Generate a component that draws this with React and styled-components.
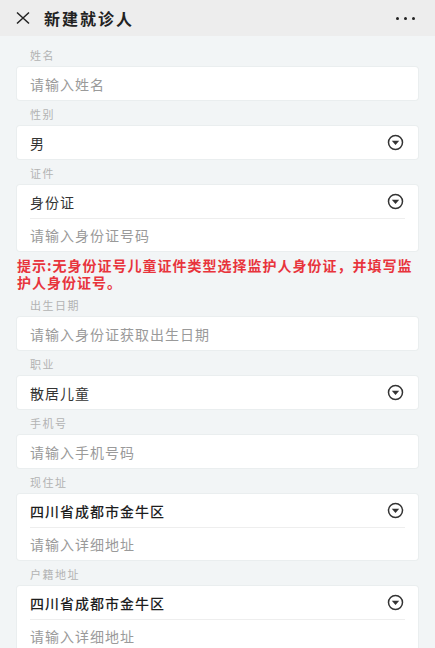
import React from "react";
import styled, { createGlobalStyle } from "styled-components";

const Global = createGlobalStyle`
  html, body { margin: 0; padding: 0; background: #f2f5f6; }
  body { font-family: "Noto Sans CJK SC", "Noto Sans", sans-serif; }
  * { box-sizing: border-box; }
`;

const Page = styled.div`
  width: 435px;
  min-height: 648px;
  background: #f2f5f6;
`;

const Header = styled.header`
  height: 36px;
  background: #ededed;
  display: flex;
  align-items: center;
  padding: 0 14px 0 15px;
`;

const Title = styled.h1`
  margin: 0 0 0 13px;
  flex: 1;
  font-size: 16px;
  letter-spacing: 2px;
  line-height: 36px;
  font-weight: 700;
  color: #222;
`;

const Dots = styled.div`
  display: flex;
  gap: 5px;
  margin-right: 6px;
`;

const Dot = styled.span`
  width: 3px;
  height: 3px;
  border-radius: 50%;
  background: #222;
`;

const Body = styled.main`
  padding: 5px 17px 0;
`;

const Label = styled.div`
  padding: 6px 0 4px 13px;
  font-size: 11px;
  letter-spacing: 1.5px;
  line-height: 16px;
  color: #b3b3b3;
`;

const Card = styled.div`
  background: #fff;
  border-radius: 3px;
  box-shadow: 0 0 0 1px #eaeeef;
  padding: 0 13px;
`;

const Row = styled.div`
  height: 33px;
  display: flex;
  align-items: center;
  justify-content: space-between;
  font-size: 14px;
  letter-spacing: 1px;
  color: ${(p) => (p.$value ? (p.$strong ? "#1e1e1e" : "#333") : "#9a9a9a")};
  font-weight: ${(p) => (p.$strong ? 500 : 400)};
  & + & { border-top: 1px solid #eeeeee; }
`;

const Hint = styled.p`
  margin: 0;
  padding: 6px 0 0;
  font-size: 14px;
  letter-spacing: 1px;
  line-height: 17px;
  font-weight: 700;
  color: #e8343c;
`;

const CloseIcon = () => (
  <svg width="16" height="16" viewBox="0 0 16 16">
    <path d="M2 2.5 L14 13.5 M14 2.5 L2 13.5" stroke="#222" strokeWidth="1.5" fill="none" />
  </svg>
);

const Caret = () => (
  <svg width="17" height="17" viewBox="0 0 17 17" style={{ marginRight: 1 }}>
    <circle cx="8.5" cy="8.5" r="7" stroke="#333" strokeWidth="1.5" fill="none" />
    <path d="M4.8 6.8 L12.2 6.8 L8.5 11 Z" fill="#333" />
  </svg>
);

const Field = ({ label, rows }) => (
  <>
    <Label>{label}</Label>
    <Card>
      {rows.map((r, i) => (
        <Row key={i} $value={r.value} $strong={r.strong}>
          <span>{r.text}</span>
          {r.select && <Caret />}
        </Row>
      ))}
    </Card>
  </>
);

export default function App() {
  return (
    <Page>
      <Global />
      <Header>
        <CloseIcon />
        <Title>新建就诊人</Title>
        <Dots>
          <Dot />
          <Dot />
          <Dot />
        </Dots>
      </Header>
      <Body>
        <Field label="姓名" rows={[{ text: "请输入姓名" }]} />
        <Field label="性别" rows={[{ text: "男", value: true, select: true }]} />
        <Field
          label="证件"
          rows={[
            { text: "身份证", value: true, select: true },
            { text: "请输入身份证号码" },
          ]}
        />
        <Hint>提示:无身份证号儿童证件类型选择监护人身份证，并填写监护人身份证号。</Hint>
        <Field label="出生日期" rows={[{ text: "请输入身份证获取出生日期" }]} />
        <Field label="职业" rows={[{ text: "散居儿童", value: true, select: true }]} />
        <Field label="手机号" rows={[{ text: "请输入手机号码" }]} />
        <Field
          label="现住址"
          rows={[
            { text: "四川省成都市金牛区", value: true, strong: true, select: true },
            { text: "请输入详细地址" },
          ]}
        />
        <Field
          label="户籍地址"
          rows={[
            { text: "四川省成都市金牛区", value: true, strong: true, select: true },
            { text: "请输入详细地址" },
          ]}
        />
      </Body>
    </Page>
  );
}
